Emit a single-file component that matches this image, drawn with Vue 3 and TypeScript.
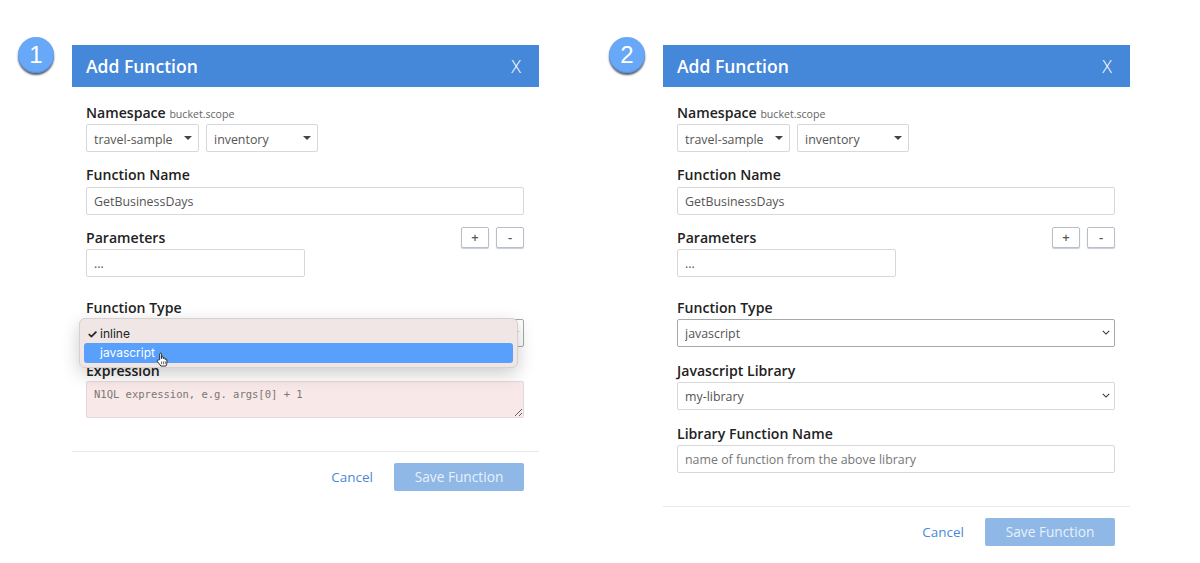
<script setup lang="ts">
const one: string = '1'
const two: string = '2'
</script>

<template>
  <div class="page">
    <section class="step">
      <div class="badge">{{ one }}</div>
      <div class="dialog">
        <header class="head"><h2>Add Function</h2><span class="close">X</span></header>
        <div class="body">
          <div class="field ns">
            <label>Namespace <small>bucket.scope</small></label>
            <div class="row">
              <div class="pick"><select><option>travel-sample</option></select><svg viewBox="0 0 10 5"><path d="M0 0h10L5 5z" /></svg></div>
              <div class="pick"><select><option>inventory</option></select><svg viewBox="0 0 10 5"><path d="M0 0h10L5 5z" /></svg></div>
            </div>
          </div>
          <div class="field">
            <label>Function Name</label>
            <input value="GetBusinessDays" />
          </div>
          <div class="field params">
            <div class="tools"><button>+</button><button>-</button></div>
            <label>Parameters</label>
            <input class="short" value="..." />
          </div>
          <div class="field type">
            <label>Function Type</label>
            <div class="long focus">
              <select><option>inline</option></select>
              <svg viewBox="0 0 10 6"><path d="M1 1l4 4 4-4" /></svg>
            </div>
            <div class="menu">
              <div class="opt"><span class="check">✓</span>inline</div>
              <div class="opt on">javascript</div>
              <svg class="hand" viewBox="0 0 14 17">
                <path d="M4 8V2.2c0-1.5 2-1.5 2 0V7l.1-1.2c.2-1.2 1.8-1.1 1.9.1V7c.2-1 1.8-1 1.9.2V8c.2-.9 1.7-.8 1.8.3v3.4c0 1.5-.5 2.3-1 3.3H5.300C4.300 13.600 3 12 1.500 10.300.6 9 2.100 7.700 3.200 8.700z" />
                <path class="lines" d="M6 10v3M8 10v3M10 10v3" />
              </svg>
            </div>
          </div>
          <div class="field expr">
            <label>Expression</label>
            <textarea placeholder="N1QL expression, e.g. args[0] + 1"></textarea>
          </div>
        </div>
        <footer class="foot">
          <a class="cancel">Cancel</a><button class="save">Save Function</button>
        </footer>
      </div>
    </section>

    <section class="step">
      <div class="badge">{{ two }}</div>
      <div class="dialog">
        <header class="head"><h2>Add Function</h2><span class="close">X</span></header>
        <div class="body">
          <div class="field ns">
            <label>Namespace <small>bucket.scope</small></label>
            <div class="row">
              <div class="pick"><select><option>travel-sample</option></select><svg viewBox="0 0 10 5"><path d="M0 0h10L5 5z" /></svg></div>
              <div class="pick"><select><option>inventory</option></select><svg viewBox="0 0 10 5"><path d="M0 0h10L5 5z" /></svg></div>
            </div>
          </div>
          <div class="field">
            <label>Function Name</label>
            <input value="GetBusinessDays" />
          </div>
          <div class="field params">
            <div class="tools"><button>+</button><button>-</button></div>
            <label>Parameters</label>
            <input class="short" value="..." />
          </div>
          <div class="field type">
            <label>Function Type</label>
            <div class="long focus">
              <select><option>javascript</option></select>
              <svg viewBox="0 0 10 6"><path d="M1 1l4 4 4-4" /></svg>
            </div>
          </div>
          <div class="field lib">
            <label>Javascript Library</label>
            <div class="long">
              <select><option>my-library</option></select>
              <svg viewBox="0 0 10 6"><path d="M1 1l4 4 4-4" /></svg>
            </div>
          </div>
          <div class="field lib">
            <label>Library Function Name</label>
            <input placeholder="name of function from the above library" />
          </div>
        </div>
        <footer class="foot">
          <a class="cancel">Cancel</a><button class="save">Save Function</button>
        </footer>
      </div>
    </section>
  </div>
</template>

<style>
html, body { background: #fff; }
</style>

<style scoped>
.page {
  display: flex;
  gap: 124px;
  padding: 45px 0 0 72px;
  height: 518px;
  overflow: hidden;
  font-family: "Open Sans", sans-serif;
  color: #555;
}
.step { position: relative; width: 467px; }
.badge {
  position: absolute;
  left: -54px;
  top: -8px;
  width: 36px;
  height: 36px;
  border-radius: 50%;
  background: #68a8f8;
  box-shadow: 0 2px 2px #555e6b, inset 0 -1px 1px #5590d8;
  color: #fff;
  font: 24px/35px "Liberation Sans", sans-serif;
  text-align: center;
}
.head {
  height: 42px;
  background: #4587d8;
  color: #fff;
  display: flex;
  align-items: center;
  justify-content: space-between;
  padding: 0 18px 0 14px;
}
.head h2 { margin: 0; font-size: 17.500px; font-weight: 600; }
.close { font-size: 18px; font-weight: 300; }
.body { padding: 16px 15px 0 14px; }
.field { position: relative; margin-top: 13px; }
.field:first-child { margin-top: 0; }
label {
  display: block;
  height: 20px;
  line-height: 20px;
  margin-bottom: 2px;
  font-size: 14.100px;
  font-weight: 600;
  color: #222;
}
small { font-size: 10.600px; font-weight: 400; color: #666; }
.ns label, .params label, .type label, .lib label { margin-bottom: 1px; }
.type { margin-top: 21px; }
.lib, .expr { margin-top: 14px; }
.expr label { margin: 0; }
.row { display: flex; gap: 7px; }
.pick { position: relative; width: 113px; }
.pick + .pick { width: 112px; }
.pick select { padding-top: 2px; }
.pick svg { position: absolute; right: 7px; top: 12px; width: 8px; height: 4px; fill: #444; }
select, input {
  display: block;
  box-sizing: border-box;
  width: 100%;
  height: 28px;
  margin: 0;
  padding: 0 7px;
  border: 1px solid #d8d8d8;
  border-radius: 2px;
  background: #fff;
  font: 12.400px "Open Sans", sans-serif;
  color: #555;
  appearance: none;
  outline: none;
}
input::placeholder { color: #777; opacity: 1; }
.short { width: 219px; }
.long { position: relative; }
.long svg {
  position: absolute;
  right: 5px;
  top: 11px;
  width: 8px;
  height: 5px;
  fill: none;
  stroke: #333;
  stroke-width: 1.300;
}
.focus select { border-color: #a8a8a8; }
.tools {
  position: absolute;
  top: -1px;
  right: 0;
  display: flex;
  gap: 7px;
}
.tools button {
  box-sizing: border-box;
  width: 28px;
  height: 21px;
  padding: 0;
  border: 1px solid #b8bfc8;
  border-radius: 2px;
  background: #fff;
  box-shadow: 0 1px 1px #c8cdd4;
  font: 600 13px/17px "Open Sans", sans-serif;
  color: #555;
}
.menu {
  position: absolute;
  left: -7px;
  top: 20px;
  box-sizing: border-box;
  width: 439px;
  height: 50px;
  padding: 4px;
  border: 1px solid #d6d0cf;
  border-radius: 6px;
  background: #efe6e5;
  box-shadow: 0 6px 18px rgba(0, 0, 0, 0.2);
  font: 12px/20px Inter, "Liberation Sans", sans-serif;
  color: #222;
  z-index: 2;
}
.opt { position: relative; height: 20px; padding-left: 16px; line-height: 21px; }
.check { position: absolute; left: 3px; font-size: 12px; font-weight: 700; }
.opt.on { background: #58a0fc; color: #fff; border-radius: 3px; line-height: 20px; }
.hand {
  position: absolute;
  left: 76px;
  top: 33px;
  width: 13px;
  height: 16px;
  fill: #fff;
  stroke: #222;
  stroke-width: 1;
}
.hand .lines { fill: none; stroke-width: 0.7; }
textarea {
  display: block;
  box-sizing: border-box;
  width: 100%;
  height: 37px;
  margin: 0;
  padding: 6px 7px;
  border: 1px solid #e4d8d8;
  border-radius: 2px;
  background: #f9e8e8;
  font: 10.500px "DejaVu Sans Mono", monospace;
  outline: none;
}
textarea::placeholder { color: #777; opacity: 1; }
.foot {
  display: flex;
  justify-content: flex-end;
  align-items: center;
  gap: 21px;
  margin-top: 33px;
  padding: 11px 15px 0 0;
  border-top: 1px solid #e8e8e8;
}
.cancel { font-size: 13.500px; color: #4a88d8; }
.save {
  width: 130px;
  height: 28px;
  padding: 0 0 1px;
  border: 0;
  border-radius: 2px;
  background: #8fb8e6;
  color: #e8f0fa;
  font: 13.700px "Open Sans", sans-serif;
}
</style>
